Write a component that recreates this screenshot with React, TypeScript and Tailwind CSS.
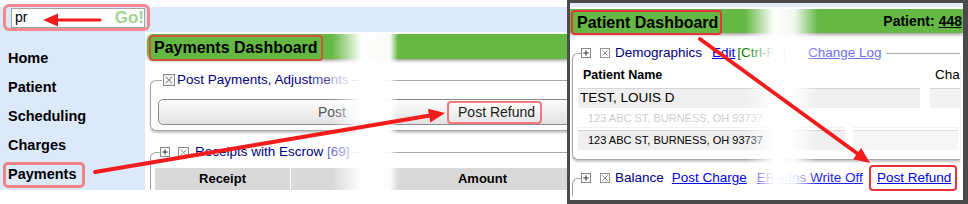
import React from "react";

const XBox = ({ size = 11 }: { size?: number }) => (
  <svg width={size} height={size} viewBox="0 0 11 11" className="shrink-0">
    <rect x="0.5" y="0.5" width="10" height="10" fill="#fff" stroke="#8a8a8a" />
    <path d="M2.5 2.5 L8.5 8.5 M8.5 2.5 L2.5 8.5" stroke="#8a8a8a" strokeWidth="1" />
  </svg>
);

const PlusBox = ({ size = 11 }: { size?: number }) => (
  <svg width={size} height={size} viewBox="0 0 11 11" className="shrink-0">
    <rect x="0.5" y="0.5" width="10" height="10" fill="#fff" stroke="#7a7a7a" />
    <path d="M2.5 5.5 H8.5 M5.5 2.5 V8.5" stroke="#222" strokeWidth="1" />
  </svg>
);

const navItems = ["Home", "Patient", "Scheduling", "Charges"];

function Sidebar() {
  return (
    <div className="h-[158px] w-[145px] shrink-0 bg-[#dce9fb] pt-[12px] text-[14.5px] font-bold text-black">
      {navItems.map((item) => (
        <div key={item} className="flex h-[29px] items-center pl-[8px]">
          {item}
        </div>
      ))}
      <div className="flex h-[29px] items-center">
        <span className="ml-[3px] flex h-[26px] items-center rounded-[5px] border-[3px] border-[#ef8282] pl-[2px] pr-[5px]">
          Payments
        </span>
      </div>
    </div>
  );
}

function PaymentsMain() {
  return (
    <div className="min-w-0 flex-1 pl-[2px] pt-[2px]">
      <div className="flex h-[25px] w-[430px] items-start rounded-l-[6px] bg-[#65b844] shadow-[0_2px_3px_rgba(0,0,0,0.35)]">
        <div className="ml-[2px] mt-[1px] flex h-[26px] items-center rounded-[4px] border-2 border-[#d2553c] pl-[3px] pr-[3px] text-[16px] font-bold text-black">
          Payments Dashboard
        </div>
      </div>

      <fieldset className="ml-[3px] mt-[13px] w-[440px] rounded-l-[6px] border border-r-0 border-[#a5a5a5] pb-[5px] shadow-[0_2px_2px_rgba(0,0,0,0.22)]">
        <legend className="ml-[11px] flex h-[16px] items-center gap-[2px] pl-[1px] pr-[3px] text-[13.5px] text-[#000080]">
          <XBox size={12} />
          <span>
            Post Payments, Adjust<span className="text-[#4a4aa8]">me</span>
            <span className="text-[#a8a8d8]">nts</span>
          </span>
        </legend>
        <div className="ml-[7px] mt-[11px] flex h-[26px] w-[420px] items-center rounded-[5px] border border-[#8a8a8a] bg-[linear-gradient(to_bottom,#fdfdfd,#e2e2e2)] text-[14px]">
          <span className="ml-[159px] text-[#555]">Post</span>
          <span className="ml-[101px] flex h-[23px] items-center rounded-[4px] border-2 border-[#f07878] bg-[linear-gradient(to_bottom,#fdfdfd,#e6e6e6)] pl-[9px] pr-[5px] text-[#1a1a1a]">
            Post Refund
          </span>
        </div>
      </fieldset>

      <fieldset className="ml-[3px] mt-[13px] w-[440px] rounded-tl-[6px] border border-b-0 border-r-0 border-[#a5a5a5]">
        <legend className="ml-[9px] flex h-[16px] items-center pr-[3px] text-[13.5px] text-[#000080]">
          <PlusBox size={10} />
          <span className="ml-[8px]">
            <XBox size={11} />
          </span>
          <span className="ml-[6px]">
            Receipts with Escrow <span className="text-[#6b6bd0]">[69]</span>
          </span>
        </legend>
        <div className="ml-[4px] mt-[8px] flex h-[22px] items-center bg-[#d9d9d9] text-[13px] font-bold text-black">
          <div className="w-[135px] shrink-0 text-center">Receipt</div>
          <div className="flex h-full w-[384px] shrink-0 items-center justify-center border-l border-white">
            Amount
          </div>
        </div>
      </fieldset>
    </div>
  );
}

function LeftPage() {
  return (
    <div className="flex h-[204px] w-[567px] shrink-0 flex-col overflow-hidden">
      <div className="h-[32px] shrink-0 bg-[linear-gradient(to_bottom,#fff_7px,#dce9fb_7px)] pl-[3px] pt-[4px]">
        <div className="flex h-[27px] w-[147px] items-center rounded-[6px] border-[3px] border-[#f08a8a] pl-[5px]">
          <div className="flex h-[20px] w-[134px] items-center border border-[#a3a3a3] bg-white pl-[3px]">
            <span className="text-[14px] text-black">pr</span>
            <span className="ml-auto text-[17px] font-bold leading-none text-[#9ed48f]">Go!</span>
          </div>
        </div>
      </div>
      <div className="flex">
        <Sidebar />
        <PaymentsMain />
      </div>
    </div>
  );
}

function PatientWindow() {
  return (
    <div className="h-[204px] w-[401px] shrink-0 border-b-[4px] border-l-[3px] border-r-[5px] border-t-[3px] border-[#4b4b4b]">
      <div className="flex h-full flex-col overflow-hidden bg-white">
        <div className="h-[4px] shrink-0 bg-[#e2ebfa]" />
        <div className="h-[2px] shrink-0" />
        <div className="flex h-[24px] shrink-0 items-start bg-[#65b844] shadow-[0_2px_3px_rgba(0,0,0,0.35)]">
          <div className="ml-[1px] mt-[1px] flex h-[25px] items-center rounded-[4px] border-2 border-[#e8333a] pl-[4px] pr-[2px] text-[16px] font-bold text-black">
            Patient Dashboard
          </div>
          <div className="ml-auto flex h-full shrink-0 items-center whitespace-nowrap pr-[1px] text-[14px] font-bold text-black">
            Patient: <span className="ml-[4px] underline">448</span>
          </div>
        </div>

        <fieldset className="ml-[2px] mt-[12px] w-[386px] shrink-0 rounded-l-[6px] border border-r-0 border-[#a6a6a6] pb-[9px] shadow-[0_2px_2px_rgba(0,0,0,0.22)]">
          <legend className="ml-[8px] flex h-[16px] items-center pr-[4px] text-[13.5px] whitespace-nowrap">
            <PlusBox size={10} />
            <span className="ml-[9px]">
              <XBox size={10} />
            </span>
            <span className="ml-[5px] text-[#000080]">Demographics</span>
            <span className="ml-[10px] text-[#0000ee] underline">Edit</span>
            <span className="ml-[2px] text-[#008000]">[Ctrl-F2]</span>
            <span className="ml-[22px] text-[#6f6ff2] underline">Change Log</span>
          </legend>
          <div className="mt-[4px] flex h-[20px] items-center pl-[10px] text-black">
            <span className="w-[352px] shrink-0 text-[12.5px] font-bold">Patient Name</span>
            <span className="text-[13.5px]">Cha</span>
          </div>
          <div className="mt-[3px] flex h-[20px] pl-[5px]">
            <div className="flex w-[342px] shrink-0 items-center border-t border-[#d6d6d6] bg-[#efefef] pl-[2px] text-[13.5px] text-black">
              TEST, LOUIS D
            </div>
            <div className="ml-[10px] w-[30px] shrink-0 border-t border-[#d6d6d6] bg-[#f2f2f2]" />
          </div>
          <div className="mt-[2px] flex h-[18px] pl-[5px] opacity-20">
            <div className="flex w-[267px] shrink-0 items-center border-b border-[#bbb] pl-[10px] text-[11px] text-black">
              123 ABC ST, BURNESS, OH 93737
            </div>
            <div className="ml-[8px] w-[105px] shrink-0 border-b border-[#bbb]" />
          </div>
          <div className="mt-[2px] flex h-[20px] pl-[5px]">
            <div className="flex w-[267px] shrink-0 items-center border-t border-[#d6d6d6] bg-[#efefef] pl-[10px] text-[11px] text-black">
              123 ABC ST, BURNESS, OH 93737
            </div>
            <div className="ml-[8px] w-[105px] shrink-0 border-t border-[#e2e2e2] bg-[#f6f6f6]" />
          </div>
        </fieldset>

        <fieldset className="ml-[2px] mt-[10px] w-[386px] shrink-0 rounded-tl-[6px] border border-b-0 border-r-0 border-[#a6a6a6] pb-[10px]">
          <legend className="ml-[8px] flex h-[16px] items-center text-[13.5px] whitespace-nowrap">
            <PlusBox size={10} />
            <span className="ml-[9px]">
              <XBox size={10} />
            </span>
            <span className="ml-[5px] text-[#000080]">Balance</span>
            <span className="ml-[8px] text-[#0000ee] underline">Post Charge</span>
            <span className="ml-[10px] text-[#1e1ef0] underline">ERA/Ins Write Off</span>
            <span className="ml-[6px] flex h-[26px] shrink-0 items-center rounded-[4px] border-2 border-[#e8333a] pl-[6px] pr-[4px] text-[#0000ee] underline">
              Post Refund
            </span>
          </legend>
        </fieldset>
      </div>
    </div>
  );
}

export default function App() {
  return (
    <div className="relative flex h-[204px] w-[968px] overflow-hidden bg-white font-['Liberation_Sans',Arial,sans-serif]">
      <LeftPage />
      <PatientWindow />

      {/* seams left by the screenshot collage */}
      <div className="pointer-events-none absolute left-[332px] top-[33px] h-[162px] w-[66px] bg-[linear-gradient(to_right,rgba(255,255,255,0),#fff_45%,rgba(255,255,255,0.95)_88%,rgba(255,255,255,0))]" />
      <div className="pointer-events-none absolute left-[745px] top-[8px] h-[190px] w-[73px] bg-[linear-gradient(to_right,rgba(255,255,255,0),#fff_40%,rgba(255,255,255,0.9)_68%,rgba(255,255,255,0))]" />

      <svg className="pointer-events-none absolute left-0 top-0" width="968" height="204" viewBox="0 0 968 204">
        <g fill="#f21c1c" stroke="#f21c1c" strokeLinecap="round">
          <line x1="100" y1="20" x2="57" y2="20" strokeWidth="3" />
          <polygon points="43,20 58,13.5 58,26.5" stroke="none" />
          <line x1="95" y1="172" x2="430" y2="115.5" strokeWidth="4" />
          <polygon points="445,113 430.4,122.6 428,108.8" stroke="none" />
          <line x1="700" y1="39" x2="858" y2="154" strokeWidth="4" />
          <polygon points="870,163 853,159.2 861.2,147.9" stroke="none" />
        </g>
      </svg>
    </div>
  );
}
